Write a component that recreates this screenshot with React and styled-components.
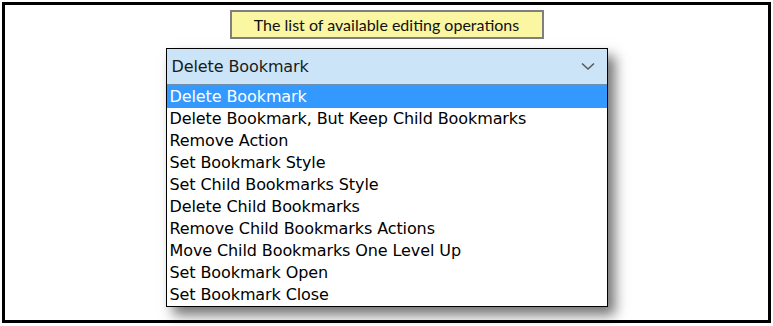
import React from 'react'
import styled, { createGlobalStyle } from 'styled-components'

const GlobalStyle = createGlobalStyle`
  html, body {
    margin: 0;
    padding: 0;
    background: #ffffff;
  }
`

const Frame = styled.div`
  box-sizing: border-box;
  margin: 2px;
  width: 769px;
  height: 321px;
  border: 3px solid #000000;
  display: flex;
  flex-direction: column;
  align-items: center;
`

const Caption = styled.div`
  box-sizing: border-box;
  margin-top: 5px;
  width: 314px;
  height: 29px;
  background: #fbf6a2;
  border: 2px solid #7f7f7f;
  display: flex;
  align-items: center;
  justify-content: center;
  font-family: Lato, "Open Sans", sans-serif;
  font-size: 16px;
  color: #111111;
`

const Dropdown = styled.div`
  box-sizing: border-box;
  margin-top: 9px;
  width: 442px;
  border: 1px solid #000000;
  background: #ffffff;
  box-shadow: 7px 8px 12px rgba(0, 0, 0, 0.55);
  font-family: "DejaVu Sans", sans-serif;
  font-size: 16px;
  letter-spacing: -0.1px;
`

const Combo = styled.div`
  box-sizing: border-box;
  height: 37px;
  padding: 0 12px 0 5px;
  display: flex;
  align-items: center;
  justify-content: space-between;
  background: #cce4f7;
  border-bottom: 2px solid #6d8fae;
  color: #1a1a1a;
`

const List = styled.ul`
  list-style: none;
  margin: 0;
  padding: 0;
`

const Item = styled.li`
  height: 22px;
  line-height: 22px;
  padding-left: 3px;
  white-space: nowrap;
  background: ${p => (p.$selected ? '#3399ff' : '#ffffff')};
  color: ${p => (p.$selected ? '#ffffff' : '#000000')};
`

const Chevron = () => (
  <svg width="14" height="9" viewBox="0 0 14 9">
    <path d="M1 1.5 L7 7 L13 1.5" fill="none" stroke="#5a5a5a" strokeWidth="1.6" />
  </svg>
)

const operations = [
  'Delete Bookmark',
  'Delete Bookmark, But Keep Child Bookmarks',
  'Remove Action',
  'Set Bookmark Style',
  'Set Child Bookmarks Style',
  'Delete Child Bookmarks',
  'Remove Child Bookmarks Actions',
  'Move Child Bookmarks One Level Up',
  'Set Bookmark Open',
  'Set Bookmark Close',
]

export default function App() {
  return (
    <>
      <GlobalStyle />
      <Frame>
        <Caption>The list of available editing operations</Caption>
        <Dropdown>
          <Combo>
            <span>Delete Bookmark</span>
            <Chevron />
          </Combo>
          <List>
            {operations.map((op, i) => (
              <Item key={op} $selected={i === 0}>{op}</Item>
            ))}
          </List>
        </Dropdown>
      </Frame>
    </>
  )
}
